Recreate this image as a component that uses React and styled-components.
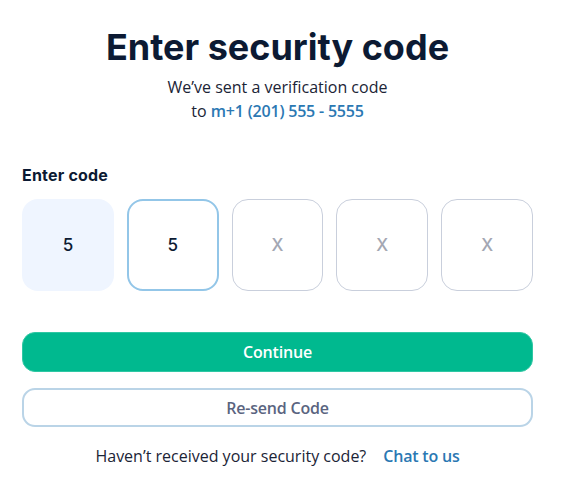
import React from "react";
import styled, { createGlobalStyle } from "styled-components";

const GlobalStyle = createGlobalStyle`
  html, body { margin: 0; padding: 0; background: #ffffff; }
  body { font-family: "Open Sans", "Liberation Sans", sans-serif; }
  * { box-sizing: border-box; }
`;

const Page = styled.div`
  width: 511px;
  margin-left: 22px;
  padding-top: 25px;
  display: flex;
  flex-direction: column;
`;

const Title = styled.h1`
  margin: 0;
  text-align: center;
  font-family: "Inter", sans-serif;
  font-weight: 700;
  font-size: 36px;
  line-height: 44px;
  color: #0c1a33;
`;

const Subtitle = styled.p`
  margin: 6px 0 0;
  text-align: center;
  font-size: 16px;
  line-height: 24px;
  color: #1b2436;

  a {
    color: #2b78b3;
    text-decoration: none;
    font-weight: 600;
    letter-spacing: -0.2px;
  }
`;

const Label = styled.div`
  margin-top: 42px;
  font-family: "Inter", sans-serif;
  font-weight: 700;
  font-size: 16px;
  line-height: 20px;
  letter-spacing: 0.2px;
  color: #0c1a33;
`;

const Boxes = styled.div`
  margin-top: 14px;
  display: grid;
  grid-template-columns: repeat(5, 1fr);
  gap: 13px;
`;

const CodeBox = styled.div`
  height: 92px;
  border-radius: 16px;
  display: flex;
  align-items: center;
  justify-content: center;
  font-family: "Inter", sans-serif;
  font-size: 17px;
  font-weight: 500;
  color: ${(p) => (p.$empty ? "#a3a7b3" : "#0c1a33")};
  background: ${(p) => (p.$state === "filled" ? "#eff5ff" : "#ffffff")};
  border: ${(p) =>
    p.$state === "filled"
      ? "none"
      : p.$state === "active"
      ? "2px solid #93c6e8"
      : "1px solid #c9cfdc"};
`;

const Button = styled.button`
  width: 100%;
  height: ${(p) => (p.$primary ? "40px" : "39px")};
  margin-top: ${(p) => (p.$primary ? "41px" : "16px")};
  border-radius: 13px;
  font-family: "Open Sans", sans-serif;
  font-size: 16px;
  font-weight: 600;
  letter-spacing: -0.2px;
  cursor: pointer;
  background: ${(p) => (p.$primary ? "#00b98f" : "#ffffff")};
  color: ${(p) => (p.$primary ? "#ffffff" : "#5a6480")};
  border: ${(p) => (p.$primary ? "1px solid #2fc7a3" : "2px solid #bad4e7")};
`;

const Footer = styled.p`
  margin: 17px 0 0;
  text-align: center;
  font-size: 16px;
  line-height: 24px;
  color: #1b2436;

  a {
    margin-left: 17px;
    color: #2b78b3;
    text-decoration: none;
    font-weight: 600;
    letter-spacing: -0.2px;
  }
`;

const code = [
  { v: "5", s: "filled" },
  { v: "5", s: "active" },
  { v: "X", s: "empty" },
  { v: "X", s: "empty" },
  { v: "X", s: "empty" },
];

export default function App() {
  return (
    <>
      <GlobalStyle />
      <Page>
        <Title>Enter security code</Title>
        <Subtitle>
          We’ve sent a verification code
          <br />
          to <a href="#">m+1 (201) 555 - 5555</a>
        </Subtitle>
        <Label>Enter code</Label>
        <Boxes>
          {code.map((c, i) => (
            <CodeBox key={i} $state={c.s} $empty={c.s === "empty"}>
              {c.v}
            </CodeBox>
          ))}
        </Boxes>
        <Button $primary>Continue</Button>
        <Button>Re-send Code</Button>
        <Footer>
          Haven’t received your security code?
          <a href="#">Chat to us</a>
        </Footer>
      </Page>
    </>
  );
}
